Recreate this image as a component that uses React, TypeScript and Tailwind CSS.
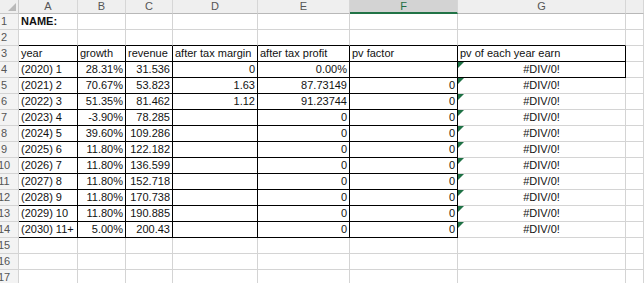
import React from 'react';

const cols = ['A', 'B', 'C', 'D', 'E', 'F', 'G', ''];
const colW = ['w-[59px]', 'w-[48px]', 'w-[47px]', 'w-[85px]', 'w-[92px]', 'w-[108px]', 'w-[168px]', 'flex-1'];

type Cell = { t?: string; a?: 'l' | 'r' | 'c'; b?: boolean; err?: boolean };

const years = [
  ['(2020) 1', '28.31%', '31.536', '0', '0.00%', ''],
  ['(2021) 2', '70.67%', '53.823', '1.63', '87.73149', '0'],
  ['(2022) 3', '51.35%', '81.462', '1.12', '91.23744', '0'],
  ['(2023) 4', '-3.90%', '78.285', '', '0', '0'],
  ['(2024) 5', '39.60%', '109.286', '', '0', '0'],
  ['(2025) 6', '11.80%', '122.182', '', '0', '0'],
  ['(2026) 7', '11.80%', '136.599', '', '0', '0'],
  ['(2027) 8', '11.80%', '152.718', '', '0', '0'],
  ['(2028) 9', '11.80%', '170.738', '', '0', '0'],
  ['(2029) 10', '11.80%', '190.885', '', '0', '0'],
  ['(2030) 11+', '5.00%', '200.43', '', '0', '0'],
];

function buildRows(): Cell[][] {
  const rows: Cell[][] = [];
  rows.push([{ t: 'NAME:', b: true }]);
  rows.push([]);
  rows.push(
    ['year', 'growth', 'revenue', 'after tax margin', 'after tax profit', 'pv factor', 'pv of each year earn'].map((t) => ({ t }))
  );
  years.forEach((y) => {
    const r: Cell[] = [{ t: y[0] }];
    for (let i = 1; i < 6; i++) r.push({ t: y[i], a: 'r' });
    r.push({ t: '#DIV/0!', a: 'c', err: true });
    rows.push(r);
  });
  rows.push([], [], []);
  return rows;
}

// each cell owns its right + bottom edge
function edges(row: number, col: number) {
  const inTable = row >= 3 && row <= 14 && col <= 5;
  const gTop = (row === 3 || row === 4) && col === 6;
  const right = inTable || gTop;
  const bottom = inTable || gTop || (row === 2 && col <= 6);
  return { right, bottom };
}

export default function App() {
  const rows = buildRows();
  return (
    <div
      className="w-[644px] h-[283px] overflow-hidden bg-white text-[11px] text-[#111]"
      style={{ fontFamily: '"Liberation Sans", Arial, sans-serif' }}
    >
      {/* column headers */}
      <div className="flex h-[14px] bg-[#efefef]">
        <div className="relative w-[19px] shrink-0 border-r border-b border-[#c8c8c8]">
          <div className="absolute right-[2px] bottom-[2px] w-0 h-0 border-l-[8px] border-l-transparent border-b-[8px] border-b-[#b9b9b9]" />
        </div>
        {cols.map((c, i) => (
          <div
            key={i}
            className={`${colW[i]} shrink-0 flex items-center justify-center leading-none text-[11px] border-r border-[#d6d6d6] ${
              c === 'F'
                ? 'bg-[#d3d3d3] text-[#1f6e43] border-b-2 border-b-[#217346]'
                : 'text-[#555] border-b border-b-[#b8b8b8]'
            }`}
          >
            {c}
          </div>
        ))}
      </div>

      {rows.map((r, ri) => {
        const rowNum = ri + 1;
        return (
          <div key={ri} className="flex h-[16px]">
            <div className="w-[19px] shrink-0 overflow-hidden bg-[#f3f3f3] border-r border-b border-[#d4d4d4] flex items-end">
              <div className="w-[30px] -ml-[11px] shrink-0 text-center text-[#555] text-[11px] leading-[15px]">{rowNum}</div>
            </div>
            {cols.map((_, ci) => {
              const cell = r[ci] || {};
              const e = edges(rowNum, ci);
              const align = cell.a === 'r' ? 'justify-end pr-[2px]' : cell.a === 'c' ? 'justify-center' : 'justify-start pl-[2px]';
              return (
                <div
                  key={ci}
                  className={`${colW[ci]} shrink-0 relative flex items-end overflow-visible whitespace-nowrap leading-[15px] border-r border-b ${align} ${
                    e.right ? 'border-r-black' : 'border-r-[#d4d4d4]'
                  } ${e.bottom ? 'border-b-black' : 'border-b-[#d4d4d4]'} ${cell.b ? 'font-bold' : ''}`}
                >
                  {cell.err && (
                    <div className="absolute left-0 top-0 w-0 h-0 border-t-[6px] border-t-[#1e7145] border-r-[6px] border-r-transparent" />
                  )}
                  {cell.t}
                </div>
              );
            })}
          </div>
        );
      })}
    </div>
  );
}
